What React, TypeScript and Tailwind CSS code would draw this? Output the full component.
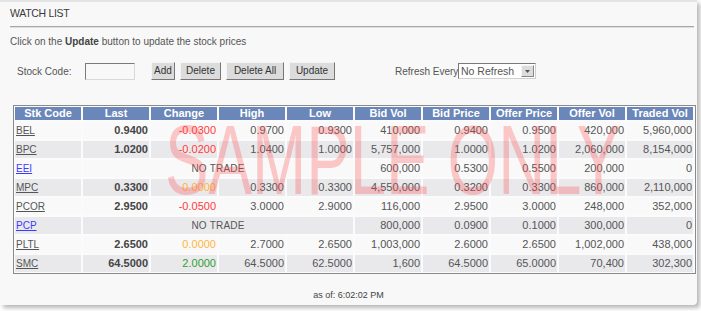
import React from "react";

type Row = {
  code: string;
  link?: boolean;
  last?: string;
  change?: string;
  changeColor?: string;
  high?: string;
  low?: string;
  bidVol: string;
  bidPrice: string;
  offerPrice: string;
  offerVol: string;
  traded: string;
};

const RED = "text-[#ff3a3a]";
const ORANGE = "text-[#ffb53a]";
const GREEN = "text-[#2f9f2f]";

const rows: Row[] = [
  { code: "BEL", last: "0.9400", change: "-0.0300", changeColor: RED, high: "0.9700", low: "0.9300", bidVol: "410,000", bidPrice: "0.9400", offerPrice: "0.9500", offerVol: "420,000", traded: "5,960,000" },
  { code: "BPC", last: "1.0200", change: "-0.0200", changeColor: RED, high: "1.0400", low: "1.0000", bidVol: "5,757,000", bidPrice: "1.0000", offerPrice: "1.0200", offerVol: "2,060,000", traded: "8,154,000" },
  { code: "EEI", link: true, bidVol: "600,000", bidPrice: "0.5300", offerPrice: "0.5500", offerVol: "200,000", traded: "0" },
  { code: "MPC", last: "0.3300", change: "0.0000", changeColor: ORANGE, high: "0.3300", low: "0.3300", bidVol: "4,550,000", bidPrice: "0.3200", offerPrice: "0.3300", offerVol: "860,000", traded: "2,110,000" },
  { code: "PCOR", last: "2.9500", change: "-0.0500", changeColor: RED, high: "3.0000", low: "2.9000", bidVol: "116,000", bidPrice: "2.9500", offerPrice: "3.0000", offerVol: "248,000", traded: "352,000" },
  { code: "PCP", link: true, bidVol: "800,000", bidPrice: "0.0900", offerPrice: "0.1000", offerVol: "300,000", traded: "0" },
  { code: "PLTL", last: "2.6500", change: "0.0000", changeColor: ORANGE, high: "2.7000", low: "2.6500", bidVol: "1,003,000", bidPrice: "2.6000", offerPrice: "2.6500", offerVol: "1,002,000", traded: "438,000" },
  { code: "SMC", last: "64.5000", change: "2.0000", changeColor: GREEN, high: "64.5000", low: "62.5000", bidVol: "1,600", bidPrice: "64.5000", offerPrice: "65.0000", offerVol: "70,400", traded: "302,300" },
];

const headers = ["Stk Code", "Last", "Change", "High", "Low", "Bid Vol", "Bid Price", "Offer Price", "Offer Vol", "Traded Vol"];

function Btn({ label, w }: { label: string; w: string }) {
  return (
    <div className={`${w} shrink-0 h-[18px] flex items-center justify-center whitespace-nowrap bg-[#dcdcdc] border border-t-[#f4f4f4] border-l-[#f4f4f4] border-r-[#777] border-b-[#777] text-[10px] text-[#333] leading-none`}>
      {label}
    </div>
  );
}

export default function App() {
  return (
    <div className="w-[701px] h-[311px] bg-white overflow-hidden" style={{ fontFamily: '"Liberation Sans", Arial, sans-serif' }}>
      <div className="relative w-[697px] h-[305px] bg-[#f8f8f8] border-t-2 border-[#e4e4e4] rounded-br-[4px] shadow-[3px_3px_4px_rgba(0,0,0,0.28)]">
        <div className="h-[24px] pl-[10px] flex items-center text-[10.5px] text-[#3a3a3a] tracking-[-0.3px]">WATCH LIST</div>
        <div className="mx-[10px] w-[684px] h-px bg-[#a8a8a8]" />
        <div className="mx-[10px] w-[684px] h-px bg-[#dedede]" />
        <div className="mt-[6px] h-[14px] pl-[10px] flex items-center text-[10px] text-[#555]">
          Click on the&nbsp;<span className="font-bold text-[#444]">Update</span>&nbsp;button to update the stock prices
        </div>
        <div className="mt-[14px] h-[18px] flex items-center text-[10px] text-[#555] whitespace-nowrap">
          <span className="ml-[17px] w-[68px] shrink-0">Stock Code:</span>
          <div className="w-[50px] shrink-0 h-[17px] bg-[#f8f8f8] border border-t-[#7a7a7a] border-l-[#7a7a7a] border-r-[#d8d8d8] border-b-[#d8d8d8]" />
          <div className="ml-[16px] flex gap-[5px] shrink-0">
            <Btn label="Add" w="w-[24px]" />
            <Btn label="Delete" w="w-[41px]" />
            <Btn label="Delete All" w="w-[58px]" />
            <Btn label="Update" w="w-[46px]" />
          </div>
          <span className="ml-[60px] w-[63px] shrink-0 text-[#555]">Refresh Every</span>
          <div className="w-[78px] shrink-0 h-[16px] flex items-center justify-between bg-white border border-t-[#7a7a7a] border-l-[#7a7a7a] border-r-[#cfcfcf] border-b-[#cfcfcf]">
            <span className="pl-[2px] text-[10.5px] text-[#555] leading-none">No Refresh</span>
            <div className="mr-px w-[13px] h-[12px] bg-[#dcdcdc] border border-t-[#f4f4f4] border-l-[#f4f4f4] border-r-[#888] border-b-[#888] flex items-center justify-center">
              <svg width="5" height="3" viewBox="0 0 5 3"><path d="M0 0h5L2.5 3z" fill="#555" /></svg>
            </div>
          </div>
        </div>

        <div className="relative mt-[25px] ml-[13px] w-[683px] border border-[#8a8a8a] bg-[#fbfbfb] p-px">
          <div className="grid grid-cols-[repeat(10,66px)] gap-[2px]">
            {headers.map((h) => (
              <div key={h} className="h-[13px] bg-[#6b86b8] text-white text-[11px] font-bold flex items-center justify-center leading-none">
                {h}
              </div>
            ))}
            {rows.map((r, i) => {
              const bg = i % 2 === 1 ? "bg-[#e9e9ec]" : "bg-[#f9f9f9]";
              const base = `h-[17px] ${bg} text-[11px] flex items-center justify-end pr-px`;
              const cell = `${base} text-[#555]`;
              return (
                <React.Fragment key={r.code}>
                  <div className={`h-[17px] ${bg} text-[10px] flex items-center pl-px`}>
                    <span className={`underline ${r.link ? "text-[#3b3bff]" : "text-[#555]"}`}>{r.code}</span>
                  </div>
                  {r.last ? (
                    <>
                      <div className={`${base} font-bold text-[#444]`}>{r.last}</div>
                      <div className={`${base} ${r.changeColor}`}>{r.change}</div>
                      <div className={cell}>{r.high}</div>
                      <div className={cell}>{r.low}</div>
                    </>
                  ) : (
                    <div className={`col-span-4 h-[17px] ${bg} text-[10px] flex items-center justify-center text-[#555] tracking-[0.2px]`}>NO TRADE</div>
                  )}
                  <div className={cell}>{r.bidVol}</div>
                  <div className={cell}>{r.bidPrice}</div>
                  <div className={cell}>{r.offerPrice}</div>
                  <div className={cell}>{r.offerVol}</div>
                  <div className={cell}>{r.traded}</div>
                </React.Fragment>
              );
            })}
          </div>
          <div className="absolute left-[151px] top-[5px] pointer-events-none text-[98px] leading-none text-[rgba(255,80,80,0.3)] whitespace-nowrap origin-left scale-x-[0.665]">
            SAMPLE ONLY
          </div>
        </div>

        <div className="mt-[15px] text-center text-[9px] text-[#444]">as of: 6:02:02 PM</div>
      </div>
    </div>
  );
}
